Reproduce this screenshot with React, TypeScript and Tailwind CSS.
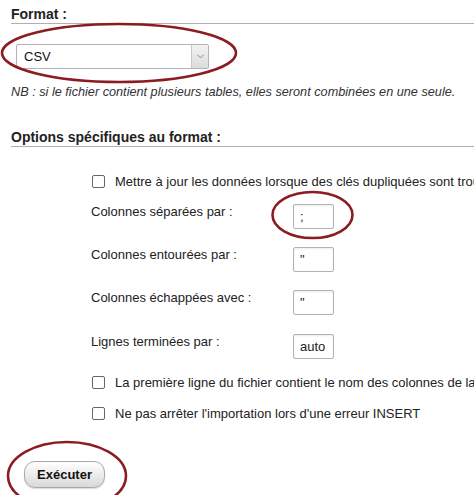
import React from "react";

const font = { fontFamily: '"Liberation Sans", Arial, sans-serif' };

const Check = ({ label }: { label: string }) => (
  <div className="flex items-center h-[31px] pl-[92px] whitespace-nowrap">
    <span className="w-[13px] h-[13px] border border-[#666] rounded-[2px] bg-white shrink-0" />
    <span className="ml-[10px] text-[13px] text-[#222]">{label}</span>
  </div>
);

const Row = ({ label, value, h }: { label: string; value: string; h: string }) => (
  <div className={`flex pl-[91px] ${h}`}>
    <span className="w-[202px] text-[13px] leading-[16px] text-[#222]">{label}</span>
    <span className="w-[41px] h-[25px] border border-[#b3b3b3] rounded-[2px] bg-white text-[13px] leading-[23px] pl-[6px] text-[#222] shadow-[inset_0_1px_2px_rgba(0,0,0,0.08)]">
      {value}
    </span>
  </div>
);

export default function App() {
  return (
    <div className="relative w-[474px] h-[495px] overflow-hidden bg-white" style={font}>
      <div className="pl-[11px]">
        <h2 className="pt-[6px] pb-[1px] leading-[16px] text-[14px] font-bold text-[#222] border-b border-[#b0b0b0]">
          Format :
        </h2>
      </div>

      <div className="ml-[16px] mt-[20px] w-[193px] h-[25px] flex border border-[#b3b3b3] rounded-[2px] bg-white">
        <span className="flex-1 pl-[7px] text-[13px] leading-[23px] text-[#111]">CSV</span>
        <span className="w-[17px] h-full flex items-center justify-center bg-gradient-to-b from-[#f2f2f2] to-[#dcdcdc] border-l border-[#c8c8c8]">
          <svg width="7" height="5" viewBox="0 0 7 5">
            <path d="M0.5 0.8 L3.5 3.8 L6.5 0.8" fill="none" stroke="#888" strokeWidth="1" />
          </svg>
        </span>
      </div>

      <p className="pl-[11px] mt-[15px] text-[12.7px] leading-[16px] italic text-[#333] whitespace-nowrap">
        NB : si le fichier contient plusieurs tables, elles seront combinées en une seule.
      </p>

      <div className="pl-[11px] mt-[29px]">
        <h2 className="leading-[16px] pb-[1px] text-[14px] font-bold text-[#222] border-b border-[#b0b0b0]">
          Options spécifiques au format :
        </h2>
      </div>

      <div className="mt-[19px]">
        <Check label="Mettre à jour les données lorsque des clés dupliquées sont trouvées" />
      </div>

      <div className="mt-[7px]">
        <Row label="Colonnes séparées par :" value=";" h="h-[43px]" />
        <Row label="Colonnes entourées par :" value={'"'} h="h-[43px]" />
        <Row label="Colonnes échappées avec :" value={'"'} h="h-[44px]" />
        <Row label="Lignes terminées par :" value="auto" h="h-[25px]" />
      </div>

      <div className="mt-[8px]">
        <Check label="La première ligne du fichier contient le nom des colonnes de la table" />
        <Check label="Ne pas arrêter l'importation lors d'une erreur INSERT" />
      </div>

      <div className="pl-[24px] mt-[32px]">
        <button className="w-[81px] h-[27px] rounded-[11px] border border-[#a8a8a8] bg-gradient-to-b from-[#ffffff] to-[#d9d9d9] text-[13px] font-bold text-[#111] shadow-[0_1px_1px_rgba(0,0,0,0.15)]">
          Exécuter
        </button>
      </div>

      <svg className="absolute inset-0 pointer-events-none" width="474" height="495">
        <g fill="none" stroke="#8c1c22" strokeWidth="2.6">
          <ellipse cx="119" cy="53" rx="117" ry="29" />
          <ellipse cx="312.5" cy="215" rx="40" ry="23" />
          <ellipse cx="67" cy="476" rx="59" ry="34" />
        </g>
      </svg>
    </div>
  );
}
